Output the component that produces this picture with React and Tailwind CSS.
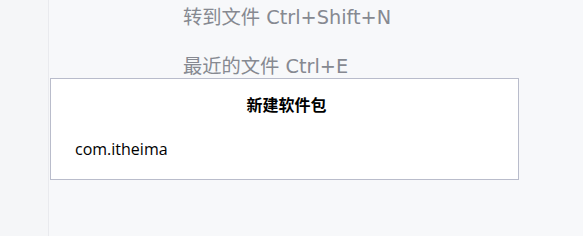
import React from 'react';

const font = { fontFamily: '"Open Sans", "Noto Sans CJK SC", sans-serif' };
const hintFont = { fontFamily: '"DejaVu Sans", "Noto Sans CJK SC", sans-serif' };

export default function App() {
    return (
        <div className="relative flex h-[236px] w-[583px] overflow-hidden bg-[#f7f8fa]" style={font}>
            {/* left strip */}
            <div className="w-[49px] shrink-0 border-r border-[#e9eaee] bg-[#f5f6f8]" />

            {/* empty editor hints */}
            <div className="flex flex-col gap-[21px] pl-[134px] pt-[4px] text-[19.3px] leading-[28px] text-[#868991]" style={hintFont}>
                <p>转到文件 Ctrl+Shift+N</p>
                <p>最近的文件 Ctrl+E</p>
            </div>

            {/* new package popup */}
            <div className="absolute left-[50px] top-[78px] h-[102px] w-[469px] border border-[#b9bccb] bg-white">
                <div className="pl-[4px] pt-[15px] text-center text-[16px] font-bold leading-[22px] text-black">新建软件包</div>
                <div className="pl-[24px] pt-[22px] text-[16px] leading-[22px] text-black">com.itheima</div>
            </div>
        </div>
    );
}
